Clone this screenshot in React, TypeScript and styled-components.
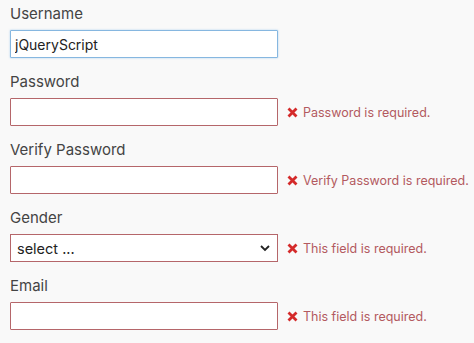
import React from "react";
import styled, { createGlobalStyle } from "styled-components";

const Global = createGlobalStyle`
  html, body { margin: 0; padding: 0; background: #f9f9f9; }
  body { font-family: Inter, "Noto Sans", sans-serif; color: #333; }
`;

const Form = styled.form`
  display: flex;
  flex-direction: column;
  gap: 14px;
  padding: 4px 0 0 10px;
`;

const Group = styled.div`
  display: flex;
  flex-direction: column;
  gap: 6px;
`;

const Label = styled.label`
  font-size: 15px;
  line-height: 20px;
  color: #444;
`;

const Row = styled.div`
  display: flex;
  align-items: center;
  gap: 9px;
`;

const Field = styled.input<{ $error?: boolean }>`
  box-sizing: border-box;
  width: 268px;
  height: 28px;
  margin: 0;
  padding: 0 4px;
  font-family: Inter, "Noto Sans", sans-serif;
  font-size: 14px;
  color: #222;
  background: #fff;
  border: 1px solid ${(p) => (p.$error ? "#b5666a" : "#86b7e0")};
  border-radius: 1px;
  outline: none;
  box-shadow: ${(p) => (p.$error ? "none" : "0 0 2px rgba(102,170,230,0.6)")};
`;

const SelectBox = styled.div`
  box-sizing: border-box;
  width: 268px;
  height: 28px;
  display: flex;
  align-items: center;
  justify-content: space-between;
  padding: 0 6px 0 6px;
  background: #fff;
  border: 1px solid #b5666a;
  font-size: 14.5px;
  color: #222;
`;

const Error = styled.span`
  display: flex;
  align-items: center;
  gap: 5px;
  white-space: nowrap;
  font-size: 12.5px;
  color: #b35a60;
`;

const X = () => (
  <svg width="11" height="11" viewBox="0 0 11 11">
    <path d="M1.5 1.5 L9.5 9.5 M9.5 1.5 L1.5 9.5" stroke="#d42a2a" strokeWidth="2.8" strokeLinecap="butt" />
  </svg>
);

const Chevron = () => (
  <svg width="12" height="8" viewBox="0 0 12 8">
    <path d="M2 2 L6 6 L10 2" stroke="#222" strokeWidth="1.8" fill="none" />
  </svg>
);

const Err = ({ text }: { text: string }) => (
  <Error>
    <X />
    {text}
  </Error>
);

export default function App() {
  return (
    <>
      <Global />
      <Form onSubmit={(e) => e.preventDefault()}>
        <Group>
          <Label>Username</Label>
          <Row>
            <Field defaultValue="jQueryScript" />
          </Row>
        </Group>
        <Group>
          <Label>Password</Label>
          <Row>
            <Field $error type="password" />
            <Err text="Password is required." />
          </Row>
        </Group>
        <Group>
          <Label>Verify Password</Label>
          <Row>
            <Field $error type="password" />
            <Err text="Verify Password is required." />
          </Row>
        </Group>
        <Group>
          <Label>Gender</Label>
          <Row>
            <SelectBox>
              <span>select ...</span>
              <Chevron />
            </SelectBox>
            <Err text="This field is required." />
          </Row>
        </Group>
        <Group>
          <Label>Email</Label>
          <Row>
            <Field $error type="email" />
            <Err text="This field is required." />
          </Row>
        </Group>
      </Form>
    </>
  );
}
